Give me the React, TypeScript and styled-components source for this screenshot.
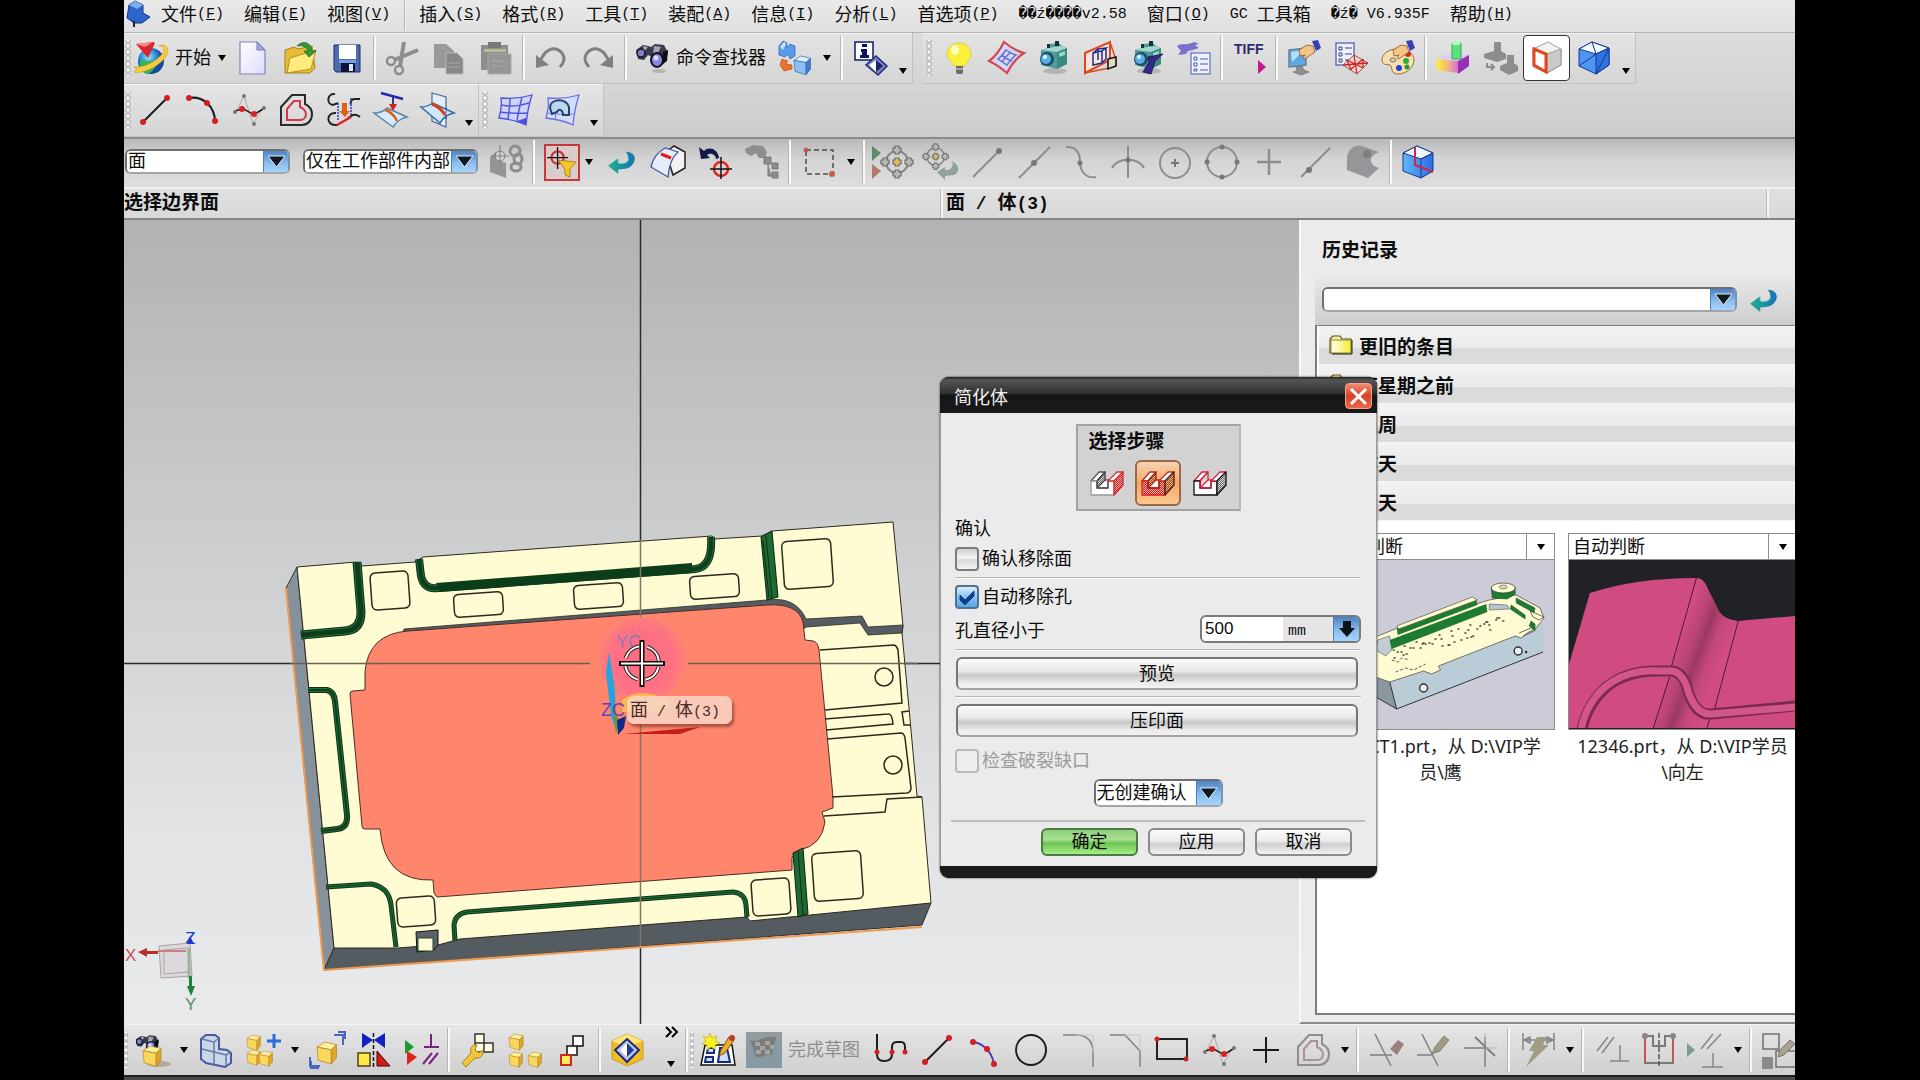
import React from "react";
import styled, { createGlobalStyle, css } from "styled-components";

const SANS = '"Liberation Sans", "Noto Sans CJK SC", sans-serif';
const MONO = '"Liberation Mono", "DejaVu Sans Mono", "Noto Sans CJK SC", monospace';

const GlobalStyle = createGlobalStyle`
  *, *::before, *::after { box-sizing: border-box; }
  body { margin: 0; background: #000; color: #0c0c0c; font-family: ${SANS}; font-size: 18px; }
  button, input, select { font: inherit; color: inherit; margin: 0; }
`;

/* ---------- frame ---------- */

const Stage = styled.div`
  min-height: 100vh;
  padding: 0 125px 0 124px;
  background: #000;
  display: flex;
`;

const AppWindow = styled.main`
  flex: 1;
  min-width: 0;
  display: flex;
  flex-direction: column;
  overflow: hidden;
  background: #d6d6d6;
`;

const MenuBar = styled.nav`
  height: 33px;
  display: flex;
  align-items: center;
  gap: 20px;
  padding: 0 0 3px 1px;
  background: linear-gradient(#e9e9e9, #e0e0e0);
  border-bottom: 1px solid #b4b4b4;
  overflow: hidden;
`;

const MenuItem = styled.button`
  flex: none;
  display: flex;
  align-items: center;
  padding: 0;
  border: 0;
  background: none;
  line-height: 26px;
  white-space: pre;
`;

const AppMark = styled(MenuItem)`
  width: 16px;
`;

const Latin = styled.span`
  font-family: ${MONO};
  font-size: 15px;
`;

const MenuSep = styled.span`
  flex: none;
  width: 2px;
  height: 32px;
  margin: 0 -7px 0 -6px;
  border-left: 1px solid #b2b2b2;
  background: #f8f8f8;
`;

const Band = styled.div<{ $h: number; $top: string; $bottom: string }>`
  height: ${(p) => p.$h}px;
  display: flex;
  background: linear-gradient(${(p) => p.$top}, ${(p) => p.$bottom});
  overflow: hidden;
`;

const Strip = styled.div<{ $after?: number }>`
  flex: none;
  display: flex;
  align-items: center;
  margin-right: ${(p) => p.$after ?? 0}px;
  background: linear-gradient(#e4e4e4, #d5d5d5);
  border: 1px solid #c2c2c2;
  border-width: 0 1px 1px 0;
  box-shadow: inset 0 1px 0 #f4f4f4;
`;

const FlatStrip = styled.div`
  flex: none;
  display: flex;
  align-items: center;
`;

const Grip = styled.span<{ $w?: number }>`
  flex: none;
  width: ${(p) => p.$w ?? 12}px;
  height: 36px;
  background: radial-gradient(circle, #fafafa 0 1px, #c2c2c2 2px 3px, transparent 3px) center / 6px 6px repeat-y;
`;

const Sep = styled.span<{ $w?: number }>`
  flex: none;
  width: ${(p) => p.$w ?? 8}px;
  height: 44px;
  background: linear-gradient(90deg, #b6b6b6 0 1px, #f9f9f9 1px 3px, transparent 3px) 3px 0 no-repeat;
`;

const ToolButton = styled.button<{ $framed?: "white" | "red" }>`
  flex: none;
  width: 47px;
  height: 46px;
  padding: 0;
  border: 1px solid transparent;
  border-radius: 4px;
  background: none;
  display: grid;
  place-items: center;
  ${(p) => p.$framed === "white" && css`border-color: #333; background: #fff;`}
  ${(p) => p.$framed === "red" && css`
    width: 36px;
    height: 37px;
    margin-left: 5px;
    border: 2px solid #c8383a;
    border-radius: 0;
    background: #d9cccb;
  `}
`;

const LabelButton = styled.button<{ $dim?: boolean; $gap?: number; $pad?: number }>`
  flex: none;
  display: flex;
  align-items: center;
  gap: ${(p) => p.$gap ?? 7}px;
  height: 46px;
  padding: 0 ${(p) => p.$pad ?? 3}px;
  border: 0;
  background: none;
  line-height: 26px;
  white-space: nowrap;
  color: ${(p) => (p.$dim ? "#8f8f8f" : "#0c0c0c")};
`;

const ArrowButton = styled.button<{ $w?: number; $low?: boolean }>`
  flex: none;
  width: ${(p) => p.$w ?? 17}px;
  height: 46px;
  padding: ${(p) => (p.$low ? "26px 0 0" : "0")};
  border: 0;
  background: none;
  display: grid;
  place-items: center;
`;

const Chevron = styled.button`
  flex: none;
  width: 32px;
  height: 48px;
  padding: 0 0 7px 10px;
  border: 0;
  background: none;
  display: flex;
  flex-direction: column;
  align-items: center;
  justify-content: space-between;
`;

const Svg = styled.svg`
  display: block;
  flex: none;
  overflow: visible;
`;

/* ---------- combos ---------- */

const ComboShell = styled.span<{ $w?: number; $h: number }>`
  flex: ${(p) => (p.$w ? "none" : "1")};
  width: ${(p) => (p.$w ? `${p.$w}px` : "auto")};
  height: ${(p) => p.$h}px;
  display: flex;
  border: 2px solid #6f6f6f;
  border-right-color: #7b93ad;
  border-bottom-color: #a5a5a5;
  border-radius: 6px;
  background: #fff;
  overflow: hidden;
`;

const ComboSelect = styled.select`
  flex: 1;
  min-width: 0;
  padding: 0 0 0 1px;
  border: 0;
  background: #fff;
  appearance: none;
  line-height: 20px;
`;

const ComboArrow = styled.span`
  flex: none;
  width: 25px;
  display: grid;
  place-items: center;
  background: linear-gradient(#4d83c4, #8ec0ee 60%, #a5d4fa);
  border-left: 1px solid #4b7fc0;
  pointer-events: none;
`;

/* ---------- cue line ---------- */

const CueLine = styled.div`
  height: 33px;
  display: flex;
  background: linear-gradient(#dfdfdf, #d9d9d9);
  border-top: 2px solid #f2f2f2;
  border-bottom: 2px solid #858585;
  font-size: 19px;
  font-weight: bold;
  line-height: 28px;
  white-space: pre;
`;

const Cue = styled.div<{ $w?: number }>`
  flex: ${(p) => (p.$w ? "none" : "1")};
  width: ${(p) => (p.$w ? `${p.$w}px` : "auto")};
  padding-left: ${(p) => (p.$w ? 0 : 3)}px;
  border-right: 2px solid #f4f4f4;
  box-shadow: inset -1px 0 0 #bababa;
`;

const BoldMono = styled.span`
  font-family: ${MONO};
  font-size: 18px;
`;

/* ---------- workspace ---------- */

const Workspace = styled.div`
  position: relative;
  flex: 1;
  display: flex;
  min-height: 804px;
`;

const Viewport = styled.section`
  position: relative;
  flex: 1;
  min-width: 0;
  overflow: hidden;
  background: linear-gradient(#b1b2b4, #cbccce 38%, #e2e3e5 75%, #e9eaec);
`;

const HoverTip = styled.div`
  position: absolute;
  left: 503px;
  top: 476px;
  height: 28px;
  padding: 0 12px 0 3px;
  border-radius: 7px;
  background: rgba(248, 212, 196, 0.88);
  box-shadow: 2px 3px 3px rgba(90, 30, 20, 0.5);
  color: #4a2b26;
  line-height: 28px;
  white-space: pre;
`;

const Resource = styled.aside`
  flex: none;
  width: 496px;
  display: flex;
  flex-direction: column;
  border-left: 2px solid #f8f8f8;
  border-bottom: 2px solid #8b8b8b;
  background: #ebebeb;
  overflow: hidden;
`;

const ResourceTitle = styled.h2`
  margin: 0;
  height: 57px;
  padding-left: 21px;
  font-size: 19px;
  line-height: 62px;
`;

const SearchStrip = styled.div`
  height: 48px;
  margin-left: 14px;
  padding: 0 18px 4px 7px;
  display: flex;
  align-items: center;
  gap: 12px;
  background: linear-gradient(#e8e8e8, #cdcdcd);
`;

const PlainButton = styled.button`
  padding: 2px 0 0;
  border: 0;
  background: none;
`;

const ListBox = styled.div`
  flex: 1;
  margin: 0 0 7px 14px;
  border: 1px solid #7d7d7d;
  border-width: 1px 0 2px 2px;
  background: #fff;
  overflow: hidden;
`;

const FolderRow = styled.button`
  width: 100%;
  height: 39px;
  padding: 4px 0 0 10px;
  display: flex;
  align-items: center;
  gap: 6px;
  border: 0;
  border-left: 2px solid #fff;
  background: linear-gradient(#f3f3f3, #eaeaea 56%, #dadada 58%, #dcdcdc);
  box-shadow: inset 0 -1px 0 #f6f6f6;
  font-size: 19px;
  font-weight: bold;
  line-height: 26px;
  svg { margin-bottom: 6px; }
`;

const Cards = styled.div`
  display: flex;
  gap: 13px;
  padding: 12px 0 0 9px;
`;

const Card = styled.figure`
  flex: none;
  width: 229px;
  margin: 0;
`;

const CardHead = styled.div`
  height: 27px;
  display: flex;
  border: 1px solid #8c8c8c;
  select {
    flex: 1;
    min-width: 0;
    padding: 0 4px;
    border: 0;
    background: #fff;
    appearance: none;
    line-height: 24px;
  }
  span {
    width: 28px;
    display: grid;
    place-items: center;
    border-left: 1px solid #8c8c8c;
  }
`;

const Thumb = styled.div`
  height: 170px;
  border: 1px solid #8c8c8c;
  border-top: 0;
  overflow: hidden;
`;

const Caption = styled.figcaption`
  padding-top: 3px;
  text-align: center;
  line-height: 26px;
  font-family: "Noto Sans", "Noto Sans CJK SC", sans-serif;
  color: #222;
`;

/* ---------- dialog ---------- */

const Dialog = styled.section`
  position: absolute;
  top: 157px;
  right: 418px;
  width: 437px;
  border-radius: 9px;
  background: #1b1b1b;
  padding-bottom: 12px;
  box-shadow: 0 0 2px #111;
`;

const DialogTitle = styled.header`
  height: 36px;
  padding: 2px 5px 0 14px;
  display: flex;
  align-items: center;
  justify-content: space-between;
  border-radius: 9px 9px 0 0;
  background: linear-gradient(#222 0, #555 8%, #303030 46%, #161616 50%, #191919);
  color: #eee;
`;

const CloseButton = styled.button`
  width: 27px;
  height: 26px;
  padding: 0;
  display: grid;
  place-items: center;
  border: 1px solid #f2a08c;
  border-radius: 4px;
  background: linear-gradient(#ee8a70, #d8432a 50%, #e8694a);
`;

const DialogBody = styled.form`
  margin: 0;
  padding: 11px 15px 10px 14px;
  display: flex;
  flex-direction: column;
  gap: 6px;
  border: 1px solid #9a9a9a;
  border-width: 0 1px;
  background: #ebebeb;
`;

const StepBox = styled.fieldset`
  align-self: center;
  width: 165px;
  height: 87px;
  margin: 0;
  padding: 3px 11px 0 11px;
  border: 2px solid #a3a3a3;
  border-right-color: #b9b9b9;
  background: #d2d2d2;
`;

const StepTitle = styled.div`
  font-size: 19px;
  font-weight: bold;
  line-height: 26px;
`;

const StepRow = styled.div`
  display: flex;
  justify-content: space-between;
  align-items: center;
  margin-top: 5px;
`;

const StepButton = styled.button<{ $on?: boolean }>`
  width: ${(p) => (p.$on ? 46 : 36)}px;
  height: 46px;
  padding: 0;
  display: grid;
  place-items: center;
  border: 0;
  background: none;
  ${(p) => p.$on && css`
    border: 2px solid #9a6a48;
    border-radius: 6px;
    background: linear-gradient(#f7d3b4, #f6a866 50%, #fcc890);
  `}
`;

const Rule = styled.hr`
  width: 100%;
  height: 2px;
  margin: 0;
  border: 0;
  background: linear-gradient(#b5b5b5 50%, #fbfbfb 50%);
`;

const FieldName = styled.div`
  line-height: 24px;
`;

const CheckLabel = styled.label<{ $dim?: boolean }>`
  display: flex;
  align-items: center;
  gap: 3px;
  height: 24px;
  line-height: 24px;
  color: ${(p) => (p.$dim ? "#9b9b9b" : "#0c0c0c")};
`;

const CheckCell = styled.span`
  display: grid;
  width: 24px;
  height: 24px;
  > * { grid-area: 1 / 1; }
  svg { pointer-events: none; }
`;

const Check = styled.input`
  appearance: none;
  width: 24px;
  height: 24px;
  margin: 0;
  border: 2px solid #7c7c7c;
  border-radius: 4px;
  background: linear-gradient(#cecece, #f6f6f6 45%, #d9d9d9 55%, #f4f4f4);
  &:checked {
    border-color: #56718c;
    background: linear-gradient(#d9ecfb, #7cc0f2 55%, #56a8ea);
  }
  &:disabled { border-color: #b9b9b9; background: #ededed; }
`;

const FieldRow = styled.div`
  display: flex;
  align-items: center;
  justify-content: space-between;
  height: 28px;
`;

const UnitBox = styled.div`
  width: 161px;
  height: 28px;
  display: flex;
  border: 2px solid #7a7a7a;
  border-radius: 6px;
  background: #e6e6e6;
  overflow: hidden;
  input {
    width: 81px;
    padding: 0 0 0 3px;
    border: 0;
    background: #fff;
    font-size: 17px;
    line-height: 22px;
  }
`;

const Unit = styled.span`
  flex: 1;
  padding: 4px 0 0 5px;
  font-family: ${MONO};
  font-size: 15px;
  line-height: 22px;
`;

const UnitButton = styled.button`
  width: 26px;
  padding: 0;
  display: grid;
  place-items: center;
  border: 0;
  border-left: 1px solid #4b7fc0;
  background: linear-gradient(#4d83c4, #8ec0ee 60%, #a5d4fa);
`;

const WideButton = styled.button`
  height: 33px;
  margin: 0 3px 0 1px;
  padding: 0;
  border: 2px solid #757575;
  border-bottom-color: #a2a2a2;
  border-radius: 6px;
  background: linear-gradient(#fafafa, #e9e9e9 40%, #c9c9c9 56%, #ededed 85%, #f2f2f2);
  line-height: 26px;
`;

const CheckGap = styled.div`
  padding-top: 6px;
`;

const DialogFoot = styled.footer`
  margin: 7px -4px 0;
  padding: 6px 13px 0 0;
  display: flex;
  justify-content: flex-end;
  gap: 10px;
  border-top: 2px solid #bcbcbc;
`;

const FootButton = styled.button<{ $ok?: boolean }>`
  width: 97px;
  height: 28px;
  padding: 0;
  line-height: 22px;
  border: 2px solid ${(p) => (p.$ok ? "#4c7a44" : "#8a8a8a")};
  border-radius: 6px;
  background: ${(p) =>
    p.$ok
      ? "linear-gradient(#8fd07c, #a8e08f 40%, #6cc455 55%, #a6ee88)"
      : "linear-gradient(#fbfbfb, #ececec 45%, #cfcfcf 58%, #f2f2f2)"};
`;

const Centered = styled.div`
  display: flex;
  justify-content: center;
`;

const BottomEdge = styled.div`
  height: 5px;
  background: linear-gradient(#222 0 2px, #4a4a4a 2px);
`;

const SelectionBar = styled.div`
  height: 50px;
  display: flex;
  padding: 0 0 2px 1px;
  overflow: hidden;
  border-top: 2px solid #8b8b8b;
  background: linear-gradient(#b9b9b9, #d3d3d3 40%, #dedede);
`;

const ComboRow = styled.div`
  display: flex;
  gap: 13px;
  margin: 0 4px 2px 0;
`;

const CueTail = styled.div`
  width: 26px;
`;

const BottomBar = styled.div`
  height: 51px;
  display: flex;
  overflow: hidden;
  border-top: 1px solid #f4f4f4;
  background: linear-gradient(#e6e6e6, #cfcfcf);
`;

/* ---------- icon pieces ---------- */

const Icon: React.FC<{ children: React.ReactNode; size?: number }> = ({ children, size = 34 }) => (
  <Svg width={size} height={size} viewBox="0 0 34 34" fill="none" aria-hidden="true">{children}</Svg>
);

const Caret = () => (
  <Svg width="8" height="6" viewBox="0 0 8 6" aria-hidden="true"><path d="M0 0h8L4 6z" fill="#000" /></Svg>
);

const BigCaret = () => (
  <Svg width="19" height="13" viewBox="0 0 19 13" aria-hidden="true"><path d="M1 1h17l-8.500 11z" fill="#101820" stroke="#dcecff" /></Svg>
);

const Binoculars = () => (
  <g>
    <path d="M1 9l7-5 5 1 3 1 4-3 9 1 4 8-3 8-9 4-4-8-4-2-4 5-6-1z" fill="#3a3c4a" />
    <path d="M8 5l5 1-4 5zM19 5l7 1-3 6-5 1z" fill="#a4a6b0" />
    <circle cx="6" cy="12" r="4" fill="#7d82d0" stroke="#15151f" strokeWidth="1.500" />
    <ellipse cx="22" cy="19" rx="6" ry="7" fill="#8288e4" stroke="#15151f" strokeWidth="2" />
    <circle cx="21" cy="17" r="2.500" fill="#d8dbff" />
    <path d="M28 11l5-2-1 11-5 4z" fill="#0d0d12" />
    <ellipse cx="24" cy="30" rx="7" ry="2" fill="#b4b4b4" />
  </g>
);

const Box: React.FC<{ x: number; y: number; s?: number; c?: [string, string, string]; line?: string }> = ({
  x, y, s = 1, c = ["#ffefa0", "#fbd75c", "#dfa42a"], line = "#b5862a",
}) => (
  <g transform={`translate(${x} ${y}) scale(${s})`} stroke={line} strokeWidth=".6" strokeLinejoin="round">
    <path d="M0 4L6 0l9 2-4 4z" fill={c[0]} />
    <path d="M0 4l11 2v11L1 14z" fill={c[1]} />
    <path d="M11 6l4-4v10l-4 5z" fill={c[2]} />
  </g>
);

const Camera = () => (
  <g>
    <ellipse cx="19" cy="30" rx="12" ry="3" fill="#b4b4b4" />
    <path d="M5 9l6-2 2-4 10-1 3 3 5 2v16l-10 5-16-4z" fill="#4f9d97" />
    <path d="M5 9l6-2 14-2 6 2-9 4z" fill="#a5d6d0" />
    <path d="M21 11l10-4v16l-10 5z" fill="#3a8a84" />
    <path d="M23 12l6-2v4l-6 2z" fill="#9bd4c8" />
    <path d="M11 3h3v4h-3zM19 0h4v5h-4z" fill="#15322f" />
    <circle cx="11" cy="18" r="7" fill="#1f4c66" />
    <circle cx="10" cy="18" r="5" fill="#58aee6" />
    <circle cx="9" cy="16" r="2" fill="#e6f6ff" />
  </g>
);

const Hand: React.FC = () => (
  <g>
    <path d="M12 9l8-5 6 1 2 6-6 4-4 3-2-1 2-3-5 1z" fill="#f3c387" stroke="#8e5a24" strokeWidth=".8" />
    <path d="M25 0l6-1 3 8-5 3z" fill="#3540b4" />
  </g>
);

const OffsetShape: React.FC<{ o: string; i: string }> = ({ o, i }) => (
  <g strokeWidth="2">
    <path d="M2 32V14L13 2h13v9c4 2 7 6 7 10 0 6-4 11-10 11z" stroke={o} />
    <path d="M8 27V16l7-8h6v6c3 1 6 4 6 7s-2 6-6 6z" stroke={i} />
  </g>
);

const Spline = () => (
  <g>
    <path d="M4 19L12 3l9 28L32 13" stroke="#a9a9a9" />
    <path d="M3 18l7-2c5 0 7 5 13 5l8-5" stroke="#1d1d1d" strokeWidth="1.500" />
    <g fill="#777"><circle cx="12" cy="3" r="2" /><circle cx="3" cy="19" r="2" /><circle cx="32" cy="15" r="2" /><circle cx="22" cy="31" r="2" /></g>
    <circle cx="10" cy="16" r="3" fill="#dd2020" /><circle cx="22" cy="21" r="3" fill="#dd2020" />
  </g>
);

const Node: React.FC<{ x: number; y: number; c?: string; r?: number }> = ({ x, y, c = "#d31f22", r = 3 }) => (
  <circle cx={x} cy={y} r={r} fill={c} />
);

const Cross: React.FC<{ c: string; line: string; k: string }> = ({ c, line, k }) => (
  <g>
    <circle cx="17" cy="17" r="11" stroke={line} strokeWidth="2" />
    {[[17, 5], [29, 17], [17, 29], [5, 17]].map(([x, y]) => (
      <path key={`${x}-${y}`} d={`M${x - 4} ${y - 2}h2v-2h4v2h2v4h-2v2h-4v-2h-2z`} fill="#b8b8b8" stroke={k} strokeWidth="1.200" />
    ))}
    <path d="M15 13h4v2h2v4h-2v2h-4v-2h-2v-4h2z" fill={c} stroke={k} strokeWidth="1.200" />
  </g>
);

const ReturnArrow = () => (
  <Svg width="28" height="24" viewBox="0 0 30 26" aria-hidden="true">
    <path d="M20 2c10 0 12 8 8 13-3 5-8 6-16 6v5L1 17l11-8v5c6 1 10 0 11-4 0-3-1-6-3-8z" fill="url(#teal)" />
    <path d="M12 9v5c6 1 10 0 11-4" fill="none" stroke="#8bded6" />
  </Svg>
);

const G = "#8d8d8d";

const icons: Record<string, React.ReactNode> = {
  start: <>
    <circle cx="17" cy="20" r="13" fill="url(#globe)" />
    <path d="M6 20c4-3 7 2 11 0s6 4 3 8-5 4-8 5c-4-2-7-7-6-13z" fill="#35b45c" />
    <path d="M0 31c10 3 33-10 34-21 0-6-6-7-9-5 5 0 6 3 4 7-6 8-18 15-29 14l3 2z" fill="#f7cc3e" stroke="#c79a22" strokeWidth=".6" />
    <path d="M2 3l17-2 2 1-7 15z" fill="#d8262a" /><path d="M2 3l17-2-8 5z" fill="#f88" />
  </>,
  fresh: <><path d="M4 1h17l8 8v24H4z" fill="url(#paper)" stroke="#8284c4" strokeWidth="1.200" /><path d="M21 1v8h8z" fill="#a5a7e2" stroke="#7476bc" /></>,
  open: <><path d="M2 9l9-3 4 2 14-3 3 22-5 5-25 0z" fill="#e6bc35" stroke="#a5831b" /><path d="M7 17l26-8-5 19-24 4z" fill="#ffec7c" stroke="#b3921e" /><path d="M14 5c6-6 14-4 15 5h4l-7 6-5-6h4c-1-4-5-6-11-5z" fill="#359a35" stroke="#1c601f" strokeWidth=".7" /></>,
  save: <><path d="M4 4h26v27H6l-2-2z" fill="#5068ac" stroke="#1c2c6c" /><path d="M9 4h17v14H9z" fill="#fff" /><path d="M9 19h17v3H9z" fill="#6fa4e8" /><path d="M11 22h14v9H11z" fill="#0b1438" /><path d="M19 23h4v7h-4z" fill="#dfe7ff" /></>,
  cut: <g stroke={G} strokeWidth="3"><circle cx="6" cy="20" r="4" strokeWidth="2.500" /><circle cx="14" cy="29" r="4" strokeWidth="2.500" /><path d="M9 19L33 9M15 25L19 1" strokeWidth="4" /></g>,
  copy: <g fill={G}><path d="M2 3h12l8 7v17H2z" opacity=".85" /><path d="M14 12h11l6 6v15H14z" fill="#888" stroke="#b5b5b5" /><path d="M17 22h11M17 26h11" stroke="#aaa" /></g>,
  paste: <g fill={G}><path d="M2 4h27v25H2z" /><path d="M9 1h13v6H9z" fill="#777" /><path d="M5 8h22v3H5z" fill="#b6bd90" /><path d="M9 13h23v20H9z" fill="#959595" stroke="#aaa" /><path d="M13 20h15M13 25h15" stroke="#aaa" /></g>,
  undo: <><path d="M6 21C10 9 20 4 27 11c5 5 3 11-1 15" stroke="#7f7f84" strokeWidth="3" /><path d="M2 14v13l13-3z" fill="#7f7f84" /></>,
  redo: <><path d="M28 21C24 9 14 4 7 11c-5 5-3 11 1 15" stroke="#7f7f84" strokeWidth="3" /><path d="M32 14v13l-13-3z" fill="#7f7f84" /></>,
  find: <Binoculars />,
  finder2: <><path d="M2 5l4-5 4 2v5l3-4 5 2v10l-5 3-2-5-3 3-6-2z" fill="#5b9ae8" stroke="#2a5fb0" strokeWidth=".7" /><path d="M3 6l4-5 2 2-3 6z" fill="#c5e0fb" /><Box x={17} y={15} s={1.1} c={["#dff0ff", "#8dc0f2", "#3f7fd0"]} line="#2a63b0" /><path d="M5 18l6 2-2 3 6 1 0 4-8 2-4-6z" fill="#e4762a" stroke="#b8441c" strokeWidth=".6" /></>,
  info: <><path d="M1 1h18v18H1z" fill="#fff" stroke="#101a70" strokeWidth="1.500" /><path d="M8 3h5v3H8zM7 8h6v6h2v3H6v-3h2v-3H7z" fill="#0b1060" /><path d="M22 15l11 10-9 9-12-10z" fill="#7b83c0" stroke="#232a78" strokeWidth="1.500" /><path d="M22 19v12l-7-7z" fill="#fff" /><path d="M22 19l7 6-7 6z" fill="#1c2368" /></>,
  bulb: <><path d="M17 2c7 0 12 5 12 11 0 5-4 7-6 12H12C10 20 5 18 5 13 5 7 10 2 17 2z" fill="#fbf03c" stroke="#dccf3a" /><ellipse cx="13" cy="9" rx="4" ry="5" fill="#fffcc0" /><path d="M14 25h7v6l-1 2h-5l-1-2z" fill="#6b6b6b" /><path d="M14 28h7" stroke="#ddd" /></>,
  sheet: <><path d="M0 20C6 16 11 9 15 1c6 5 12 9 20 11-8 5-13 12-17 20C12 27 7 23 0 20z" fill="#d6d6f8" stroke="#d04850" strokeWidth="2.200" /><path d="M9 18c4-3 6-6 8-9 3 2 6 4 10 5-4 3-6 6-9 10-3-2-6-4-9-6zM13 14c3 3 6 5 10 6M22 11c-4 3-6 6-9 10" stroke="#6470cc" strokeWidth="1.500" /></>,
  camera: <Camera />,
  section: <><path d="M2 12L27 1v18L2 32z" fill="#f7e6dd" stroke="#e0481c" strokeWidth="2" /><path d="M10 12l9-2v12l-9 2zM10 12l5-4 8-1-4 3M23 7v11l-4 4M15 8v11" stroke="#1b2d8c" strokeWidth="1.500" /><path d="M27 1l6 18v6M2 32l24-5" stroke="#e0481c" strokeWidth="1.500" /><path d="M25 18l8-2v9l-8 3z" fill="#d8dcc0" stroke="#111" strokeWidth="1.500" /></>,
  cameraRibbon: <><Camera /><path d="M18 16l15-3-8 7-4 13-8-2 6-10z" fill="#35288c" stroke="#171044" strokeWidth=".8" /></>,
  options: <><path d="M0 5c4-3 8-1 11-2l7-2 4 2-4 1 4 3-6 2-5 1-2 3-8 1 3-4z" fill="#7a72cc" /><path d="M14 12h19v21H14z" fill="#eef1ff" stroke="#7c88cc" strokeWidth="1.500" /><path d="M17 16h3v3h-3zM17 22h3v3h-3zM17 28h3v2h-3zM23 18h8M23 23h8M23 29h8" stroke="#4c5ca8" /></>,
  tiff: <><text x="2" y="13" fontFamily="Liberation Sans, sans-serif" fontWeight="bold" fontSize="14" fill="#332a6c">TIFF</text><path d="M26 19l8 7-8 7z" fill="#c01c8c" /></>,
  monitor: <><path d="M2 9l17-2v17L2 26z" fill="#5ca8e4" stroke="#6a7f98" strokeWidth="1.500" /><path d="M4 11l13-2-12 12z" fill="#b4e0ff" /><path d="M9 26l6-1 2 4 5 2-8 3-8-3 4-1z" fill="#8c8f96" stroke="#666" strokeWidth=".6" /><Hand /></>,
  listNet: <><path d="M2 2h18v22H2z" fill="#eef0ff" stroke="#6770b4" strokeWidth="1.500" /><path d="M5 6h3v3H5zM5 12h3v3H5zM5 18h3v3H5zM11 7h7M11 13h7M11 19h7" stroke="#3a3f80" /><path d="M20 14l14 8-11 11L9 24z" fill="#f8d4d4" stroke="#553" strokeWidth=".8" /><path d="M13 19l16 8M9 24l25-2M20 14l3 19M29 18L16 29M13 19l4 10M29 18v9" stroke="#cf2424" strokeWidth="1.300" /></>,
  palette: <><path d="M16 8C7 8 0 14 1 20c1 5 6 3 8 4 3 2 0 9 8 9 9 0 16-7 16-14S26 8 16 8z" fill="#f7dfb2" stroke="#9c6c2c" /><ellipse cx="12" cy="19" rx="3" ry="2" fill="#d4d4d4" stroke="#8e6a3a" /><circle cx="25" cy="20" r="3" fill="#2db02d" /><circle cx="18" cy="27" r="3" fill="#1f3fd0" /><circle cx="27" cy="13" r="3" fill="#d02a20" /><circle cx="26" cy="26" r="2.500" fill="#1d9c2c" /><Hand /></>,
  solid: <><path d="M1 18l9-5h23l-8 6z" fill="#d8cdf7" /><path d="M1 18l21 2v12L1 29z" fill="url(#rainbow)" /><path d="M22 20l11-6v11l-11 8z" fill="#9a2cb8" /><path d="M16 2h9v16h-9z" fill="#5ce07a" stroke="#3aa858" /><ellipse cx="20" cy="2" rx="4.500" ry="2" fill="#b0fcc0" /></>,
  solidGray: <g fill={G}><path d="M11 1h7v9l5 3v5l-9 3L1 17v-4l10-3z" /><path d="M24 14h7v8l4 3v5l-9 4-9-5v-4l7-3z" /><path d="M4 22v4h6M8 23l3 3-3 3" stroke={G} strokeWidth="2" fill="none" /></g>,
  cubeRed: <><path d="M3 8l15-7 13 7v16L17 32 3 26z" fill="#f2f2f2" stroke="#888" strokeWidth=".8" /><path d="M17 13l14-5v16l-14 8z" fill="#c9c9c9" stroke="#888" strokeWidth=".8" /><path d="M4 8l12 5v18L4 24z" fill="#fff" stroke="#e0481c" strokeWidth="3" /></>,
  cubeBlue: <><path d="M2 8l13-7 17 6v17L19 33 2 25z" fill="#4d97f2" stroke="#16378c" /><path d="M2 8l13-7 17 6-13 6z" fill="#f2f8ff" stroke="#16378c" /><path d="M19 13l13-6v17l-13 9z" fill="#2f73e0" stroke="#16378c" /><path d="M2 25l17-12M15 1l4 12M19 33L32 7" stroke="#16378c" /></>,
  line: <><path d="M5 29L29 5" stroke="#1c1c1c" strokeWidth="2" /><Node x={5} y={29} /><Node x={29} y={5} /></>,
  arc: <><path d="M4 5c14-2 26 8 26 24" stroke="#1c1c1c" strokeWidth="2.200" /><Node x={4} y={5} /><Node x={22} y={10} /><Node x={30} y={28} /></>,
  spline: <Spline />,
  offset: <OffsetShape o="#2a2a2a" i="#d23a48" />,
  bridge: <><path d="M9 1c-8-1-9 10-2 11l5-2M34 6h-6c-3 1-4 3-3 5M10 20c-10-1-10 12-1 12h3M22 25l5-3c3-1 5 0 7 2" stroke="#222" strokeWidth="2" /><path d="M12 10v17M25 5v18" stroke="#3038c0" strokeDasharray="2 1" strokeWidth="1.500" /><path d="M11 32l14-8" stroke="#e02030" strokeWidth="2.500" /><path d="M16 10h5v8h3l-5 6-6-6h3z" fill="#e06018" /></>,
  project: <><path d="M8 0l22 6" stroke="#2228b0" strokeWidth="2.500" /><path d="M1 20c6 0 10-2 13-5l20 9c-5 1-11 5-14 10z" fill="#d5ecfb" stroke="#5a84b0" strokeWidth="1.500" /><path d="M12 17c5 1 9 5 12 11" stroke="#e0591c" strokeWidth="2.500" /><path d="M20 4v8" stroke="#3038a0" strokeWidth="2" /><path d="M16 11h8l-4 7z" fill="#d6201c" /></>,
  intersect: <><path d="M12 0l14 4v30l-14-6z" fill="#e4eefa" stroke="#4a6c9c" strokeWidth="1.200" /><path d="M1 14c6 0 9-2 12-4l21 10c-6 1-11 5-14 10z" fill="#cfe7fa" stroke="#3d6ca0" strokeWidth="1.500" /><path d="M12 11c5 2 10 6 13 11" stroke="#d6401c" strokeWidth="3" /><path d="M26 15v12" stroke="#3038a0" strokeDasharray="2 1" /></>,
  mesh: <><path d="M3 5c10 1 21 0 31-3-3 9-5 19-6 30C20 28 9 26 1 25c2-7 3-13 2-20z" fill="#cfd2fa" stroke="#4c50dc" strokeWidth="1.300" /><path d="M12 6c0 7-1 13-2 20M24 4c-2 8-4 16-5 24M3 12c9 2 19 1 28-2M2 19c9 1 17 2 27 1" stroke="#5458dc" strokeWidth="1.500" /><path d="M28 32l-9-4 9-3z" fill="#4c50dc" /></>,
  meshCurve: <><path d="M3 5c10 1 21 0 31-3-3 9-5 19-6 30C20 28 9 26 1 25c2-7 3-13 2-20z" fill="#d2dcfc" stroke="#6a70e4" strokeWidth="1.300" /><path d="M12 6c0 7-1 13-2 20M2 20c9 1 17 2 27 1" stroke="#7a80e8" /><path d="M5 15c0-10 17-10 19-1v8h-6c0-5-4-7-6-3l-5 2z" stroke="#28416c" strokeWidth="2" fill="#b9d8f0" /></>,
  assyLink: <g fill="#959595"><path d="M1 12l6-5v8l10 3v15L1 27z" /><circle cx="11" cy="11" r="5" stroke="#808080" fill="none" /><path d="M11 0v21M2 11h18" stroke="#808080" /><g stroke="#8d8d8d" strokeWidth="3" fill="none"><ellipse cx="26" cy="6" rx="5" ry="5" /><ellipse cx="29" cy="14" rx="4" ry="5" /><ellipse cx="27" cy="22" rx="5" ry="4" /></g></g>,
  filter: <><circle cx="12" cy="12" r="7" stroke="#d03038" strokeWidth="2.500" /><path d="M12 0v25M0 12h24" stroke="#111" strokeWidth="1.500" /><path d="M13 15l20 2-7 8v9l-5-2-1-7z" fill="#f8c528" stroke="#a87a10" /></>,
  page: <><path d="M15 7l8-6 11 6v16l-12 7z" fill="#f2f2f2" stroke="#222" strokeWidth="1.500" /><path d="M0 22C2 12 7 7 14 3l13 4c-6 5-9 13-10 25z" fill="#e6ecfa" stroke="#4a5c98" strokeWidth="1.300" /><path d="M10 9l10 4" stroke="#e01c1c" strokeWidth="3" /></>,
  undoTarget: <><path d="M1 2l2 12 9-1-3-3c4-3 9 0 9 4l3-1C20 4 11 1 6 6z" fill="#14194c" /><circle cx="23" cy="24" r="7" stroke="#e0251c" strokeWidth="2.500" /><path d="M23 12v22M12 24h22" stroke="#111" strokeWidth="1.500" /></>,
  treeGray: <g fill={G}><path d="M0 4l8-4 10 1 4 6-2 6-6 0-3-5-5 3-5-3z" /><path d="M19 12h7v7h-7zM27 18h6v6h-6zM27 27h6v6h-6zM23 19v12h4" stroke="#777" /></g>,
  marquee: <><path d="M4 5h27v24H4z" stroke="#4c4c4c" strokeWidth="1.500" strokeDasharray="5 3" /><Node x={4} y={5} c="#c0604c" r={2.500} /><Node x={30} y={29} c="#c0604c" r={3} /></>,
  snap1: <><g transform="translate(4 0)"><Cross c="#d8c060" line="#888" k="#6a6a6a" /></g><path d="M-4 1l9 7-9 8z" fill="#5c8c62" /><path d="M-4 19l9 7-9 8z" fill="#b07a68" /></>,
  snap2: <><g transform="translate(-1 -2) scale(.8)"><Cross c="#c8b868" line="#888" k="#6a6a6a" /></g><path d="M29 16c8 4 8 11 2 14l-9 1v4l-8-8 8-5v3c6 1 9-4 7-9z" fill="#8fa19d" /></>,
  end: <><path d="M3 32L29 6" stroke={G} strokeWidth="2" /><Node x={29} y={6} c="#777" /></>,
  mid: <><path d="M2 33L33 2" stroke={G} strokeWidth="2" /><Node x={17} y={18} c="#777" /></>,
  ctrl: <><path d="M2 2c10-1 14 6 14 15s6 17 16 15" stroke={G} strokeWidth="2" /><Node x={16} y={18} c="#777" r={2.500} /></>,
  inter: <><path d="M17 1v32M1 23c6-11 26-11 32 0" stroke={G} strokeWidth="2" /><Node x={17} y={15} c="#777" r={2.500} /></>,
  center: <><circle cx="17" cy="18" r="15" stroke={G} strokeWidth="2" /><path d="M17 14v8M13 18h8" stroke="#777" strokeWidth="2" /></>,
  quad: <><circle cx="17" cy="17" r="15" stroke={G} strokeWidth="2" />{[[17, 2], [32, 17], [17, 32], [2, 17]].map(([x, y]) => <Node key={`${x}-${y}`} x={x} y={y} c="#777" r={2.500} />)}</>,
  plusGray: <path d="M17 4v26M5 17h24" stroke={G} strokeWidth="2.500" />,
  onCurve: <><path d="M2 32L31 3" stroke={G} strokeWidth="2" /><Node x={10} y={25} c="#777" /></>,
  onFace: <><path d="M1 12C3 3 9-1 16 1l17 6c-7 3-9 6-8 10 1 3 4 5 8 6l-11 10L1 25z" fill="#96969a" /><circle cx="21" cy="9" r="4" fill="#7e7e82" /></>,
  solidEdge: <><path d="M2 8l14-7 16 7v18l-12 7L2 26z" fill="url(#bluebox)" stroke="#16378c" /><path d="M2 8l14-7 16 7-12 6z" fill="#eef6ff" stroke="#16378c" /><path d="M20 14v19M32 8l-12 6" stroke="#16378c" /><path d="M14 2v18l18 7" stroke="#d3244c" strokeWidth="2" /></>,
  asmFind: <><g transform="scale(.72)"><Binoculars /></g><ellipse cx="24" cy="31" rx="12" ry="3" fill="#b2aa92" /><Box x={8} y={13} s={1.2} /></>,
  asmBoxes: <g strokeWidth="1.500"><path d="M2 6l5-4h9l4 3v11l8 1 4 3v10l-6 4-19-4-5-4z" fill="#c9d8e6" stroke="#4c58a0" strokeWidth="2" /><path d="M3 6l12 3v23M15 9l5-4M3 16l12 3 12 3 5-3M27 22v11" stroke="#6878a8" /></g>,
  asmAdd: <><Box x={1} y={2} s={0.9} /><Box x={1} y={17} s={0.9} /><Box x={13} y={18} s={0.9} /><path d="M28 1v14M21 8h14" stroke="#2a6ee0" strokeWidth="3" /></>,
  asmMove: <><Box x={7} y={9} s={1.3} /><path d="M24 2h9v10M28 -1h7v7M0 24v9h10M1 28v7h8" stroke="#4a68c0" strokeWidth="2" /></>,
  mirror: <><path d="M5 0l11 7-11 8zM28 0L17 7l11 8z" fill="#1520c4" /><path d="M16.500 0v34" stroke="#111" strokeDasharray="4 2" strokeWidth="1.500" /><path d="M1 20h12v13H1z" fill="#fbe94c" stroke="#55400c" strokeWidth="1.500" /><path d="M20 18l13 15H20z" fill="#d41c16" stroke="#400" /></>,
  constrain: <><path d="M1 7l9 7-9 7z" fill="#179a2c" /><path d="M3 18l10 6-10 8z" fill="#dd2418" /><path d="M27 1v13M20 14h15M19 31l9-11M25 31l9-11" stroke="#7c2080" strokeWidth="2" /></>,
  wrench: <><path d="M14 1h9v9h9v9h-18z" fill="#fffbe0" stroke="#333" strokeWidth="1.500" /><path d="M14 10h9v9" stroke="#333" strokeWidth="1.500" /><path d="M1 30l9-10c-2-6 3-9 6-8l-2 5 4 3 4-3c1 6-4 9-8 8L5 34z" fill="#f2c438" stroke="#a68424" /></>,
  threeBoxes: <><Box x={1} y={1} s={0.95} /><Box x={1} y={19} s={0.9} /><Box x={20} y={19} s={0.9} /></>,
  chain: <g strokeWidth="1.500"><path d="M18 3h10v10H18zM12 13h10v9H12z" fill="#fff" stroke="#111" /><path d="M6 22h10v10H6z" fill="#ffe95c" stroke="#d02818" strokeWidth="2" /></g>,
  hexBox: <><path d="M2 8l15-7 16 7v18l-16 7-15-7z" fill="#f2bd24" stroke="#c89a22" /><path d="M2 8l15-7 16 7-16 6z" fill="#ffe678" /><path d="M17 6l12 11-12 12L5 17z" fill="#b9c4ec" stroke="#1c2c7c" strokeWidth="2" /><path d="M17 10v14l-7-7z" fill="#fff" /><path d="M17 10l7 7-7 7z" fill="#203a9c" /></>,
  sketch: <><path d="M4 12h27l3 20H0z" fill="#fff" stroke="#111" strokeWidth="1.500" /><path d="M7 15h6v5H6zM5 24h7v5H4zM19 15l7 0 3 14H17z" fill="#cfe0fa" stroke="#152a88" strokeWidth="2" /><path d="M9 0l2 5 5-2-2 5 5 2-5 2 1 5-5-3-4 3 0-5-5-1 4-3-3-5 5 2z" fill="#f9f21c" stroke="#b8a80c" strokeWidth=".6" /><path d="M28 4l5 3-9 13-6 3 2-6z" fill="#efb02c" stroke="#7a4b10" /><circle cx="31" cy="5" r="3" fill="#c0392b" /></>,
  flag: <><path d="M-1-1h36v36H-1z" fill="#8799a2" /><path d="M-1-1h36v9H-1z" fill="#929a9e" /><path d="M3 7c8 4 11-5 26-3l-4 18c-8-2-10 4-16 2z" fill="#7c7c7c" /><path d="M8 9h5v4H8zM18 8h5v4h-5zM13 13h5v4h-5zM23 12h4v4h-4zM9 17h5v4H9zM18 17h5v4h-5z" fill="#a4a4a4" /></>,
  profile: <><path d="M4 1v20q0 7 7 7q8 0 8-7V14q0-5 5-5h4q4 0 4 5v7" stroke="#1c1c1c" strokeWidth="2" /><Node x={4} y={19} r={2.500} /><Node x={19} y={19} r={2.500} /><Node x={32} y={19} r={2.500} /></>,
  skArc: <><path d="M6 9c10 1 19 10 21 22" stroke="#5a34b0" strokeWidth="2" /><Node x={6} y={9} /><Node x={20} y={16} /><Node x={27} y={31} /></>,
  circle: <circle cx="17" cy="17" r="15" stroke="#1c1c1c" strokeWidth="2" />,
  fillet: <><path d="M2 2h13q17 0 17 18v14" stroke="#8b8080" strokeWidth="1.500" /><path d="M15 2h17v18" stroke="#c8c8c8" /></>,
  chamfer: <><path d="M2 2h15l15 16v16" stroke="#8b8080" strokeWidth="1.500" /><path d="M17 2h15v16" stroke="#c8c8c8" /></>,
  rect: <><path d="M2 6h30v20H2z" stroke="#222" strokeWidth="2" /><Node x={2} y={6} r={2.500} /><Node x={31} y={26} r={2.500} /></>,
  plus: <path d="M17 4v26M4 17h26" stroke="#1a1a1a" strokeWidth="2" />,
  offsetGray: <OffsetShape o="#8e8e8e" i="#a89494" />,
  trim: <><path d="M5 1l16 32M0 22h22" stroke="#808080" strokeWidth="1.500" /><path d="M20 16l8-9 6 4-7 11z" fill="#9c7f7f" /></>,
  extend: <><path d="M5 1l16 32M0 22h16" stroke="#808080" strokeWidth="1.500" /><path d="M15 21l3-7L27 3l5 4-9 11z" fill="#a09a80" stroke="#808080" /></>,
  corner: <><path d="M0 15h21M21 4v30" stroke="#808080" strokeWidth="1.500" /><path d="M11 4l20 19" stroke="#808080" strokeWidth="2" /><path d="M21 15h12M21 0v8" stroke="#c3b0b0" /></>,
  dim: <><path d="M2 0v17M33 0v17M3 7h29M3 7l6-3v6zM32 7l-6-3v6z" stroke="#858585" strokeWidth="1.500" /><path d="M16 4h10l-4 8h6L5 34l8-16H8z" fill="#a09c84" /></>,
  parallel: <path d="M2 18L13 4M7 20L19 4M25 12v16M15 28h19" stroke="#858585" strokeWidth="1.500" />,
  symmetric: <><path d="M3 3v27h28V3M3 3h8v10h12V3h8" stroke="#7a7a7a" strokeWidth="2" /><path d="M3 5v24M31 5v24" stroke="#c05560" strokeWidth="2" /><path d="M17 0v34" stroke="#555" strokeDasharray="5 2" strokeWidth="1.500" /><Node x={3} y={3} c="#888" /><Node x={31} y={3} c="#888" /></>,
  showCons: <><path d="M-2 10l8 7-8 7z" fill="#7c9c8c" /><path d="M12 16L24 1M18 16L32 1M24 20v14M13 34h21" stroke="#858585" strokeWidth="1.500" /></>,
  convert: <><path d="M2 1h16v15H2zM15 18h20v16H15z" stroke="#707070" strokeWidth="1.500" /><path d="M1 24h11v12H1z" fill="#8a8a8a" /><path d="M17 24l2-7L29 7l5 4-11 11z" fill="#a8a288" stroke="#777" /></>,
};

const Tool: React.FC<{ name: string; framed?: "white" | "red" }> = ({ name, framed }) => (
  <ToolButton type="button" aria-label={name} $framed={framed}>
    <Icon size={framed === "red" ? 30 : 34}>{icons[name]}</Icon>
  </ToolButton>
);

const Tools: React.FC<{ names: string[] }> = ({ names }) => (
  <>{names.map((n, i) => (n === "|" ? <Sep key={i} /> : n === "||" ? <Sep key={i} $w={10} /> : n === "v" || n === "V" ? (
    <ArrowButton key={i} type="button" aria-label="more" $w={n === "V" ? 20 : 17}><Caret /></ArrowButton>
  ) : <Tool key={i} name={n} />))}</>
);

const Overflow = () => <ArrowButton type="button" aria-label="toolbar options" $w={18} $low><Caret /></ArrowButton>;

const Combo: React.FC<{ w?: number; h: number; label: string; value: string }> = ({ w, h, label, value }) => (
  <ComboShell $w={w} $h={h}>
    <ComboSelect aria-label={label} defaultValue={value}><option value={value}>{value}</option></ComboSelect>
    <ComboArrow><BigCaret /></ComboArrow>
  </ComboShell>
);

const Menu: React.FC<{ text: string; hot: string }> = ({ text, hot }) => (
  <MenuItem type="button">{text}<Latin>(<u>{hot}</u>)</Latin></MenuItem>
);

const HiddenDefs = styled(Svg)`
  position: absolute;
`;

const Defs = () => (
  <HiddenDefs width="0" height="0" aria-hidden="true">
    <defs>
      <radialGradient id="globe" cx=".4" cy=".35"><stop offset="0" stopColor="#9fe0f8" /><stop offset=".6" stopColor="#2c8cd8" /><stop offset="1" stopColor="#144a9c" /></radialGradient>
      <radialGradient id="spot"><stop offset="0" stopColor="#fd6c80" /><stop offset=".75" stopColor="#fd7284" /><stop offset="1" stopColor="#fe8078" /></radialGradient>
      <linearGradient id="paper" x2="1" y2="1"><stop offset="0" stopColor="#fff" /><stop offset="1" stopColor="#dcdcfa" /></linearGradient>
      <linearGradient id="teal"><stop offset="0" stopColor="#22b08c" /><stop offset="1" stopColor="#1674b4" /></linearGradient>
      <linearGradient id="rainbow"><stop offset="0" stopColor="#f7f02c" /><stop offset=".5" stopColor="#f2b878" /><stop offset="1" stopColor="#d070d8" /></linearGradient>
      <linearGradient id="bluebox"><stop offset="0" stopColor="#5fb8f8" /><stop offset="1" stopColor="#2c6ee0" /></linearGradient>
      <linearGradient id="folder"><stop offset="0" stopColor="#fffef0" /><stop offset="1" stopColor="#f6ee30" /></linearGradient>
      <linearGradient id="slope" gradientUnits="userSpaceOnUse" x1="1678" y1="640" x2="1726" y2="658"><stop offset="0" stopColor="#d24c82" /><stop offset=".3" stopColor="#b84474" /><stop offset=".48" stopColor="#9c3864" /><stop offset=".7" stopColor="#c4487c" /><stop offset="1" stopColor="#d24c82" /></linearGradient>
      <pattern id="redDots" width="2" height="2" patternUnits="userSpaceOnUse"><path d="M0 0h2v2H0z" fill="#f8b0a8" /><path d="M0 0h1v1H0zM1 1h1v1H1z" fill="#d82020" /></pattern>
      <pattern id="grayDots" width="2" height="2" patternUnits="userSpaceOnUse"><path d="M0 0h2v2H0z" fill="#dcdcdc" /><path d="M0 0h1v1H0zM1 1h1v1H1z" fill="#666" /></pattern>
      <pattern id="brownDots" width="2" height="2" patternUnits="userSpaceOnUse"><path d="M0 0h2v2H0z" fill="#e8b07c" /><path d="M0 0h1v1H0zM1 1h1v1H1z" fill="#98502c" /></pattern>
    </defs>
  </HiddenDefs>
);

/* ---------- 3D model ---------- */

const Groove: React.FC<{ d: string; w: number }> = ({ d, w }) => (
  <g fill="none" strokeLinejoin="round">
    <path d={d} stroke="#10301a" strokeWidth={w} />
    <path d={d} stroke="#1f7038" strokeWidth={w - 2} />
    <path d={d} stroke="#0e3d1b" strokeWidth={Math.max(1, w - 4)} />
  </g>
);

const Pocket: React.FC<{ x: number; y: number; w: number; h: number; r?: number }> = ({ x, y, w, h, r = 5 }) => (
  <rect x={x} y={y} width={w} height={h} rx={r} fill="none" stroke="#2b2a20" strokeWidth="1.500"
    transform={`rotate(-4 ${x + w / 2} ${y + h / 2})`} />
);

const Model = () => (
  <Svg width="1175" height="804" viewBox="124 220 1175 804" role="img" aria-label="model">
    <path d="M640.500 220V1024M124 663.500H1299" stroke="#2a2a2a" strokeWidth="1.500" />
    <path d="M297 567L286 588 324 970 334 948z" fill="#87919b" stroke="#333" />
    <path d="M334 948L931 903 922 925 324 970z" fill="#545c62" stroke="#2d3032" />
    <path d="M286 588L324 970 922 927" fill="none" stroke="#ee9a50" strokeWidth="2" />
    <path d="M297 567L356 562 362 566 415 562 423 557 712 536 714 539 762 536 772 531 893 522 903 626 902 633 909 708 917 796 922 797 931 903 750 921 747 917 460 939 438 945 397 948 334 948z" fill="#fffbd2" stroke="#2b2a20" />
    <path d="M404 629L767 600Q796 596 806 619L862 616 868 627 903 625 902 633 868 635 860 623 806 627 790 640 400 640z" fill="#565d62" stroke="#2b2a20" strokeWidth=".8" />
    <path d="M408 631L767 605Q798 603 803 622L805 640 813 641Q818 642 819 650L833 797 833 808 822 812 825 822Q822 845 800 850L792 857 792 870 437 897 434 893 433 880Q384 882 380 829L365 829Q362 829 362 826L350 694Q350 691 353 691L365 690 365 672Q368 634 408 631z" fill="#ff866c" stroke="#4a2e28" />
    <Groove d="M357 562L361 612Q361 630 345 631L301 635" w={9} />
    <Groove d="M419 559L421 576Q424 590 438 588L695 569Q713 567 711 537" w={8} />
    <path d="M436 583L692 563V573L440 592z" fill="#0b3d1a" />
    <Groove d="M308 690L327 690Q334 692 335 701L347 815Q348 828 337 829L321 831" w={6} />
    <Groove d="M326 887L371 884Q389 887 391 905L396 947" w={5} />
    <Groove d="M455 941L454 925Q455 914 467 912L733 892Q745 893 746 905L747 917" w={5} />
    <path d="M761 537L772 531 778 597 767 600z" fill="#1d6a34" stroke="#0b2412" />
    <path d="M766 536L772 599M763 540L769 598" stroke="#0a3014" fill="none" />
    <path d="M793 853L803 848 808 914 798 917z" fill="#1d6a34" stroke="#0b2412" />
    <path d="M798 850L803 915" stroke="#0a3014" />
    <Pocket x={371} y={572} w={38} h={37} />
    <Pocket x={454} y={593} w={49} h={23} />
    <Pocket x={574} y={584} w={49} h={24} />
    <Pocket x={690} y={575} w={49} h={23} />
    <Pocket x={783} y={540} w={49} h={48} />
    <Pocket x={397} y={897} w={38} h={29} />
    <Pocket x={752} y={879} w={38} h={36} />
    <Pocket x={813} y={852} w={49} h={48} />
    <path d="M416 932L438 930V945L434 950 417 952z" fill="#5a6268" stroke="#111" />
    <path d="M418 938H433V951H418z" fill="#fffbd2" stroke="#174d25" />
    <g fill="none" stroke="#2b2a20" strokeWidth="1.500">
      <path d="M820 650L894 645Q897 646 898 650L902 703 825 710" />
      <circle cx="884" cy="677" r="9" /><circle cx="893" cy="765" r="9" />
      <path d="M825 719L888 714Q892 713 893 724L826 730" />
      <path d="M909 711L902 712 904 725 911 725" />
      <path d="M827 739L901 733Q904 733 905 738L911 788Q911 792 907 793L832 797" />
      <path d="M824 816L885 812 887 799 922 797" />
    </g>
    <path d="M290 663.500H590M688 663.500H918" stroke="#6a6154" strokeWidth="1.500" />
    <path d="M640.500 540V618M640.500 724V946" stroke="#7e7668" strokeWidth="1.500" />
    <circle cx="642" cy="660" r="43" fill="url(#spot)" />
    <path d="M622 700Q640 686 668 700V712H622z" fill="#fcb84e" />
    <path d="M609 652L606 672 611 716 616 730 615 690z" fill="#27a3dd" />
    <path d="M612 700L616 734 619 722z" fill="#6c9a30" />
    <path d="M617 720L626 716 624 728 618 735z" fill="#12298c" />
    <path d="M624 734L700 727 680 734z" fill="#c81c1c" />
    <g fontFamily="Liberation Sans, sans-serif">
      <text x="616" y="648" fontSize="18" fill="#8f7cb8">YC</text>
      <text x="601" y="716" fontSize="18" fill="#6a3fb8">ZC</text>
      <text x="125" y="961" fontSize="17" fill="#d05050">X</text>
      <text x="185" y="944" fontSize="17" fill="#1c38c8">Z</text>
      <text x="185" y="1010" fontSize="17" fill="#5c8a68">Y</text>
    </g>
    <circle cx="642" cy="663" r="17" fill="none" stroke="#222" strokeWidth="4" strokeDasharray="19 8" strokeDashoffset="-4" />
    <circle cx="642" cy="663" r="17" fill="none" stroke="#fff" strokeWidth="2" strokeDasharray="19 8" strokeDashoffset="-4" />
    <path d="M619 663.500H665M642 640V687" stroke="#111" strokeWidth="5" />
    <path d="M621 663.500H663M642 642V685" stroke="#fff" strokeWidth="2" />
    <path d="M159 946L190 943 192 976 161 978zM164 950L188 948 189 972 164 974z" fill="#d9d2d4" fillOpacity=".7" stroke="#a8a4a6" />
    <path d="M158 951H186" stroke="#c88080" strokeWidth="2" />
    <path d="M138 952L147 948V951H158V954H147V957z" fill="#b82c2c" />
    <path d="M187 944L190 936 194 944z" fill="#1c38c8" />
    <path d="M189 948V978" stroke="#98b89c" strokeWidth="3" />
    <path d="M189 976H192V986H195L191 996 187 986H189z" fill="#1e8434" />
  </Svg>
);

type Faces = { front: string; frontLine: string; top: string; wall: string; wallFill: string; side: string; sideLine: string; rightTop: string };

const StepGlyph: React.FC<Faces> = ({ front, frontLine, top, wall, wallFill, side, sideLine, rightTop }) => (
  <Svg width="34" height="27" viewBox="0 0 34 27" fill="none" strokeWidth="1.300" strokeLinejoin="round" aria-hidden="true">
    <path d="M7 18L15 10H18V18z" fill="#fff" />
    <path d="M1 11L9 2H15L7 11z" fill="#fff" stroke={top} />
    <path d="M7 11L15 2V10L7 18z" fill={wallFill} stroke={wall} />
    <path d="M15 10H19" stroke={wall} />
    <path d="M1 11H7V18H18V11H24V25H1z" fill={front} stroke={frontLine} />
    <path d="M7 11V18H18V11" stroke={wall} />
    <path d="M18 11L27 2H33L24 11z" fill="#fff" stroke={rightTop} />
    <path d="M24 11L33 2V15L24 25z" fill={side} stroke={sideLine} />
  </Svg>
);

const Folder = () => (
  <Svg width="24" height="20" viewBox="0 0 24 20" aria-hidden="true">
    <path d="M1 4l3-3h7l2 3h9v14H1z" fill="#f6f0a0" stroke="#57521a" strokeWidth="1.200" />
    <path d="M2 5h20v13H2z" fill="url(#folder)" stroke="#8a842a" /><path d="M23 5v14H3" fill="none" stroke="#222" />
  </Svg>
);

const drillMarks = Array.from({ length: 44 }, (_, i) => {
  const along = (i * 41 + (i % 5) * 7) % 112;
  return { x: 1394 + along, y: Math.round(650 - along * 0.34 + ((i * i * 7) % 19) * 0.8) };
});

const ThumbMold = () => (
  <Svg width="100%" height="170" viewBox="1327 560 228 170" preserveAspectRatio="none" aria-hidden="true">
    <path d="M1327 560h228v170h-228z" fill="#cccbd8" />
    <path d="M1350 668L1390 682 1425 672 1517 635 1544 622V652L1397 709 1350 682z" fill="#b9ccd8" />
    <path d="M1350 668L1390 682 1397 709 1350 682z" fill="#8b98a0" />
    <path d="M1390 682L1397 709 1544 652M1350 682L1397 709" fill="none" stroke="#333" />
    <path d="M1350 668L1390 682 1424 671 1432 674 1441 670 1439 666 1516 636 1522 638 1528 633 1537 628 1545 618 1541 608 1517 595 1490 600 1398 628 1378 636 1350 652z" fill="#fffbd2" stroke="#554" strokeWidth=".8" />
    <path d="M1378 640L1390 636 1392 650 1386 656 1376 650z" fill="#c2ccd2" stroke="#555" strokeWidth=".6" />
    <path d="M1390 640L1487 604 1488 612 1392 649z" fill="#1f7a32" />
    <path d="M1397 628L1477 599 1478 605 1398 635z" fill="#1f7a32" /><path d="M1397 626L1473 597 1478 600 1399 629z" fill="#fffbd2" stroke="#554" strokeWidth=".7" />
    <path d="M1490 604l18 1 2 4-20 1z" fill="#b8c4cc" stroke="#555" strokeWidth=".6" />
    <path d="M1492 588L1516 587V594L1508 599 1493 598z" fill="#1f7a32" stroke="#243" strokeWidth=".6" />
    <ellipse cx="1504" cy="588" rx="12" ry="5" fill="#fffbd2" stroke="#444" strokeWidth=".8" /><ellipse cx="1504" cy="587" rx="4" ry="2" fill="#dcd8b8" stroke="#555" strokeWidth=".6" />
    <path d="M1517 598L1536 608 1535 613 1517 603zM1512 605L1526 615V619L1511 609zM1532 621L1536 624V631L1530 626z" fill="#1f7a32" stroke="#243" strokeWidth=".5" />
    <path d="M1531 611L1545 617 1540 620 1534 617zM1520 633L1532 628M1524 636L1535 631" fill="#fffbd2" stroke="#444" strokeWidth=".8" />
    <path d="M1392 660l6 2 4-4 8 2M1396 672l10-4 8 2 12-6" fill="none" stroke="#555" strokeDasharray="3 2" />
    {drillMarks.map((p, i) => <ellipse key={i} cx={p.x} cy={p.y} rx="1.400" ry=".8" fill="#3c3c3c" />)}
    <circle cx="1424" cy="688" r="4" fill="#f4f4f4" stroke="#333" strokeWidth="1.500" /><circle cx="1519" cy="651" r="4" fill="#f4f4f4" stroke="#333" strokeWidth="1.500" /><circle cx="1527" cy="652" r="1.200" fill="#222" />
  </Svg>
);

const ThumbPink = () => (
  <Svg width="100%" height="170" viewBox="1569 560 228 170" preserveAspectRatio="none" aria-hidden="true">
    <path d="M1569 560h228v170h-228z" fill="#212226" />
    <path d="M1569 664L1590 593Q1636 578 1697 578Q1704 578 1708 588L1720 612Q1726 620 1738 621L1797 616V730H1569z" fill="#d04c80" />
    <path d="M1697 578Q1704 578 1708 588L1720 612Q1726 620 1738 621L1706 730H1653z" fill="url(#slope)" />
    <path d="M1697 578L1672 666M1670 677L1653 730M1739 621L1713 717M1710 720L1707 730M1661 667V676M1671 667V676" stroke="#4c1c34" fill="none" />
    <path d="M1582 730Q1588 700 1612 683Q1632 670 1660 671H1672Q1682 672 1687 685Q1694 716 1712 714L1797 706" fill="none" stroke="#7a2a50" strokeWidth="11" />
    <path d="M1581 730Q1587 699 1612 682Q1632 669 1660 671H1672Q1682 672 1687 686Q1695 715 1712 714L1797 707" fill="none" stroke="#d25688" strokeWidth="7" />
    <path d="M1569 729h228" stroke="#2a1a22" strokeWidth="2" />
  </Svg>
);

const HistoryCard: React.FC<{ art: React.ReactNode; text: React.ReactNode }> = ({ art, text }) => (
  <Card>
    <CardHead>
      <select aria-label="判断方式" defaultValue="自动判断"><option>自动判断</option></select>
      <span><Caret /></span>
    </CardHead>
    <Thumb>{art}</Thumb>
    <Caption>{text}</Caption>
  </Card>
);

export default function App() {
  return (
    <Stage>
      <GlobalStyle />
      <Defs />
      <AppWindow>
        <MenuBar>
          <AppMark type="button" aria-label="app">
            <Svg width="26" height="28" viewBox="0 0 26 28" aria-hidden="true">
              <path d="M4 4l6-4 8 4v8l7 4-8 6-8 0-7-5z" fill="#2c66cc" stroke="#123680" /><path d="M4 4l6-4 8 4-6 4z" fill="#7db0f2" /><path d="M9 20v6" stroke="#222" strokeWidth="2" />
            </Svg>
          </AppMark>
          <Menu text="文件" hot="F" />
          <Menu text="编辑" hot="E" />
          <Menu text="视图" hot="V" />
          <MenuSep />
          <Menu text="插入" hot="S" />
          <Menu text="格式" hot="R" />
          <Menu text="工具" hot="T" />
          <Menu text="装配" hot="A" />
          <Menu text="信息" hot="I" />
          <Menu text="分析" hot="L" />
          <Menu text="首选项" hot="P" />
          <MenuItem type="button"><Latin>��ź����v2.58</Latin></MenuItem>
          <Menu text="窗口" hot="O" />
          <MenuItem type="button"><Latin>GC </Latin>工具箱</MenuItem>
          <MenuItem type="button"><Latin>�ź� V6.935F</Latin></MenuItem>
          <Menu text="帮助" hot="H" />
        </MenuBar>

        <Band $h={51} $top="#dcdcdc" $bottom="#d4d4d4">
          <Strip $after={10}>
            <Grip $w={7} />
            <LabelButton type="button"><Icon>{icons.start}</Icon>开始<Caret /></LabelButton>
            <Tools names={["fresh", "open", "save", "|", "cut", "copy", "paste", "|", "undo", "redo", "||"]} />
            <LabelButton type="button" $pad={4}><Icon>{icons.find}</Icon>命令查找器</LabelButton>
            <Tools names={["finder2", "V", "||", "info"]} />
            <Overflow />
          </Strip>
          <Strip>
            <Grip />
            <Tools names={["bulb", "sheet", "camera", "section", "cameraRibbon", "options", "|", "tiff", "|", "monitor", "listNet", "palette", "|", "solid", "solidGray"]} />
            <Tool name="cubeRed" framed="white" />
            <Tool name="cubeBlue" />
            <Overflow />
          </Strip>
        </Band>

        <Band $h={53} $top="#d6d6d6" $bottom="#cbcbcb">
          <Strip>
            <Grip $w={7} />
            <Tools names={["line", "arc", "spline", "offset", "bridge", "project", "intersect"]} />
            <Overflow />
          </Strip>
          <Strip>
            <Grip />
            <Tools names={["mesh", "meshCurve"]} />
            <Overflow />
          </Strip>
        </Band>

        <SelectionBar>
          <FlatStrip>
            <ComboRow>
              <Combo w={165} h={25} label="类型过滤器" value="面" />
              <Combo w={175} h={25} label="选择范围" value="仅在工作部件内部" />
            </ComboRow>
            <Tools names={["assyLink", "||"]} />
            <Tool name="filter" framed="red" />
            <ArrowButton type="button" aria-label="more"><Caret /></ArrowButton>
            <ToolButton type="button" aria-label="return"><ReturnArrow /></ToolButton>
            <Tools names={["page", "undoTarget", "treeGray", "||", "marquee", "v", "||", "snap1", "snap2", "end", "mid", "ctrl", "inter", "center", "quad", "plusGray", "onCurve", "onFace", "|", "solidEdge"]} />
          </FlatStrip>
        </SelectionBar>

        <CueLine>
          <Cue $w={819}>选择边界面</Cue>
          <Cue>面<BoldMono> / </BoldMono>体<BoldMono>(3)</BoldMono></Cue>
          <CueTail />
        </CueLine>

        <Workspace>
          <Viewport>
            <Model />
            <HoverTip>面<Latin> / </Latin>体<Latin>(3)</Latin></HoverTip>
          </Viewport>

          <Resource>
            <ResourceTitle>历史记录</ResourceTitle>
            <SearchStrip>
              <Combo h={25} label="历史记录筛选" value="" />
              <PlainButton type="button" aria-label="return"><ReturnArrow /></PlainButton>
            </SearchStrip>
            <ListBox>
              {["更旧的条目", "两星期之前", "上周", "昨天", "今天"].map((t) => (
                <FolderRow key={t} type="button"><Folder />{t}</FolderRow>
              ))}
              <Cards>
                <HistoryCard art={<ThumbMold />} text={<>DJECT1.prt，从 D:\VIP学<br />员\鹰</>} />
                <HistoryCard art={<ThumbPink />} text={<>12346.prt，从 D:\VIP学员<br />\向左</>} />
              </Cards>
            </ListBox>
          </Resource>

          <Dialog aria-label="简化体">
            <DialogTitle>
              简化体
              <CloseButton type="button" aria-label="close">
                <Svg width="17" height="17" viewBox="0 0 17 17" aria-hidden="true"><path d="M1 1l15 15M16 1L1 16" stroke="#fff" strokeWidth="3" /></Svg>
              </CloseButton>
            </DialogTitle>
            <DialogBody>
              <StepBox>
                <StepTitle>选择步骤</StepTitle>
                <StepRow>
                  <StepButton type="button" aria-label="step 1">
                    <StepGlyph front="#fff" frontLine="#999" top="#555" wall="#444" wallFill="url(#grayDots)" side="url(#redDots)" sideLine="#d82830" rightTop="#d83038" />
                  </StepButton>
                  <StepButton type="button" aria-label="step 2" $on>
                    <StepGlyph front="url(#redDots)" frontLine="#d82020" top="#b83018" wall="#a82010" wallFill="url(#brownDots)" side="url(#brownDots)" sideLine="#4a2010" rightTop="#b83018" />
                  </StepButton>
                  <StepButton type="button" aria-label="step 3">
                    <StepGlyph front="#fff" frontLine="#111" top="#dc2038" wall="#dc2038" wallFill="#e8d0d4" side="url(#grayDots)" sideLine="#111" rightTop="#dc2038" />
                  </StepButton>
                </StepRow>
              </StepBox>
              <FieldName>确认</FieldName>
              <CheckLabel><Check type="checkbox" />确认移除面</CheckLabel>
              <Rule />
              <CheckLabel>
                <CheckCell>
                  <Check type="checkbox" defaultChecked />
                  <Svg width="24" height="24" viewBox="0 0 24 24" aria-hidden="true"><path d="M5 10l5 5 9-9v5l-9 9-5-5z" fill="#123e84" stroke="#123e84" /></Svg>
                </CheckCell>
                自动移除孔
              </CheckLabel>
              <FieldRow>
                <label htmlFor="hole">孔直径小于</label>
                <UnitBox>
                  <input id="hole" type="text" defaultValue="500" />
                  <Unit>mm</Unit>
                  <UnitButton type="button" aria-label="options">
                    <Svg width="16" height="16" viewBox="0 0 16 16" aria-hidden="true"><path d="M4 0h8v7h4l-8 9-8-9h4z" fill="#0d1118" /></Svg>
                  </UnitButton>
                </UnitBox>
              </FieldRow>
              <Rule />
              <WideButton type="button">预览</WideButton>
              <Rule />
              <WideButton type="button">压印面</WideButton>
              <CheckGap><CheckLabel $dim><Check type="checkbox" disabled />检查破裂缺口</CheckLabel></CheckGap>
              <Centered><Combo w={129} h={28} label="确认方式" value="无创建确认" /></Centered>
              <DialogFoot>
                <FootButton type="button" $ok>确定</FootButton>
                <FootButton type="button">应用</FootButton>
                <FootButton type="button">取消</FootButton>
              </DialogFoot>
            </DialogBody>
          </Dialog>
        </Workspace>

        <BottomBar>
          <FlatStrip>
            <Grip $w={4} />
            <Tools names={["asmFind", "v", "asmBoxes", "asmAdd", "v", "asmMove", "mirror", "constrain", "||", "wrench", "threeBoxes", "chain", "|", "hexBox"]} />
            <Chevron type="button" aria-label="more tools">
              <Svg width="13" height="12" viewBox="0 0 13 12" fill="none" aria-hidden="true"><path d="M1 1l5 5-5 5M7 1l5 5-5 5" stroke="#000" strokeWidth="2" /></Svg>
              <Caret />
            </Chevron>
            <Sep />
            <Grip $w={4} />
            <Tool name="sketch" />
            <LabelButton type="button" $dim $pad={6}><Icon>{icons.flag}</Icon>完成草图</LabelButton>
            <Tools names={["profile", "line", "skArc", "circle", "fillet", "chamfer", "rect", "spline", "plus", "offsetGray", "v", "||", "trim", "extend", "corner", "||", "dim", "v", "||", "parallel", "symmetric", "showCons", "v", "|", "convert"]} />
          </FlatStrip>
        </BottomBar>
        <BottomEdge />
      </AppWindow>
    </Stage>
  );
}
